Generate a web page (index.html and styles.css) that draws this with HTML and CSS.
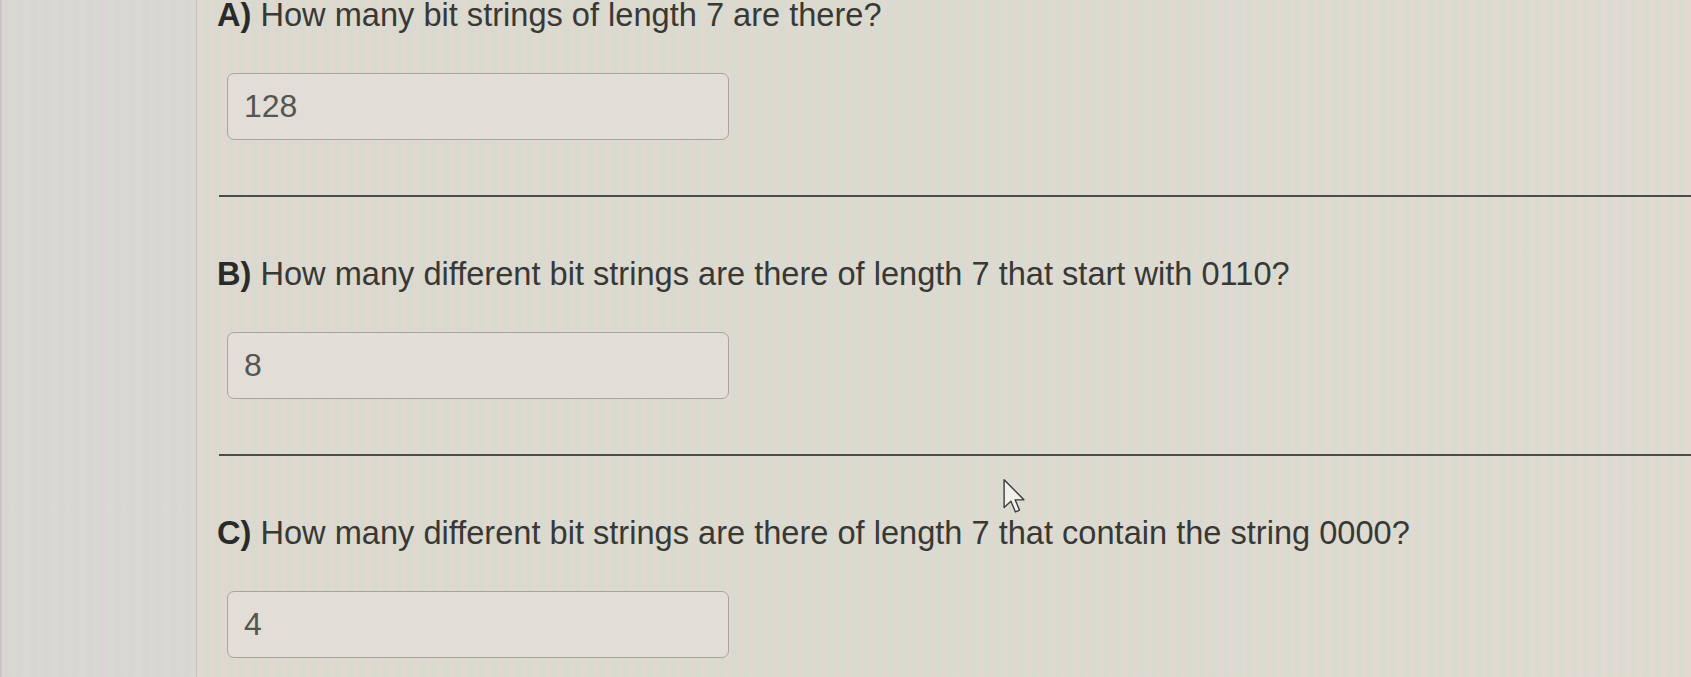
FILE: index.html
```html
<!DOCTYPE html>
<html lang="en">
<head>
<meta charset="utf-8">
<title>Bit strings</title>
<link rel="stylesheet" href="styles.css">
</head>
<body>
<div class="page">
  <aside class="sidebar"></aside>
  <main class="content">
    <section class="question">
      <p class="prompt"><b class="label">A)</b> How many bit strings of length 7 are there?</p>
      <input class="answer" type="text" value="128" readonly>
    </section>
    <hr class="rule">
    <section class="question">
      <p class="prompt"><b class="label">B)</b> How many different bit strings are there of length 7 that start with 0110?</p>
      <input class="answer" type="text" value="8" readonly>
    </section>
    <hr class="rule">
    <section class="question">
      <p class="prompt"><b class="label">C)</b> How many different bit strings are there of length 7 that contain the string 0000?</p>
      <input class="answer" type="text" value="4" readonly>
    </section>
  </main>
  <svg class="cursor" width="22" height="36" viewBox="0 0 12 19" aria-hidden="true">
    <path d="M0.6 0.6 L0.6 15.8 L4.3 12.4 L6.8 18.2 L9 17.2 L6.6 11.6 L11.4 11.6 Z" fill="#f2f0ea" stroke="#3a3a3a" stroke-width="0.75" stroke-linejoin="round"/>
  </svg>
</div>
</body>
</html>
```
FILE: styles.css
```css
html, body {
  margin: 0;
  padding: 0;
  height: 100%;
  overflow: hidden;
}

body {
  font-family: "Liberation Sans", Arial, sans-serif;
  background: #ddd8cf;
}

.page {
  position: relative;
  display: flex;
  height: 677px;
  overflow: hidden;
}

.sidebar {
  flex: 0 0 194px;
  border-left: 2px solid #cbc6c5;
  border-right: 1px solid #c8c3bc;
  background:
    repeating-linear-gradient(90deg, rgba(218,212,214,0.5) 0 7px, rgba(216,220,212,0.5) 7px 14px),
    #d9d6d3;
}

.content {
  flex: 1;
  padding-left: 20px;
  background:
    repeating-linear-gradient(90deg, rgba(228,216,210,0.45) 0 6px, rgba(212,221,206,0.45) 6px 12px),
    linear-gradient(90deg, #ddd8cf 0%, #dbd9cf 50%, #e0dbd3 100%);
}

.question {
  display: flex;
  flex-direction: column;
  align-items: flex-start;
}

.prompt {
  margin: 0;
  font-size: 32.6px;
  line-height: 30px;
  color: #383835;
  white-space: nowrap;
}

.label {
  color: #2a2a2a;
}

.answer {
  box-sizing: border-box;
  margin: 43px 0 0 10px;
  width: 502px;
  height: 67px;
  padding: 0 16px;
  border: 1px solid #a8a39b;
  border-radius: 7px;
  background: #e2ded7;
  font-family: "Liberation Sans", Arial, sans-serif;
  font-size: 32px;
  color: #555552;
  outline: none;
}

.rule {
  margin: 55px 0 62px 2px;
  height: 0;
  border: 0;
  border-top: 2px solid #4d4c47;
}

.cursor {
  position: absolute;
  left: 1003px;
  top: 478px;
}
```
